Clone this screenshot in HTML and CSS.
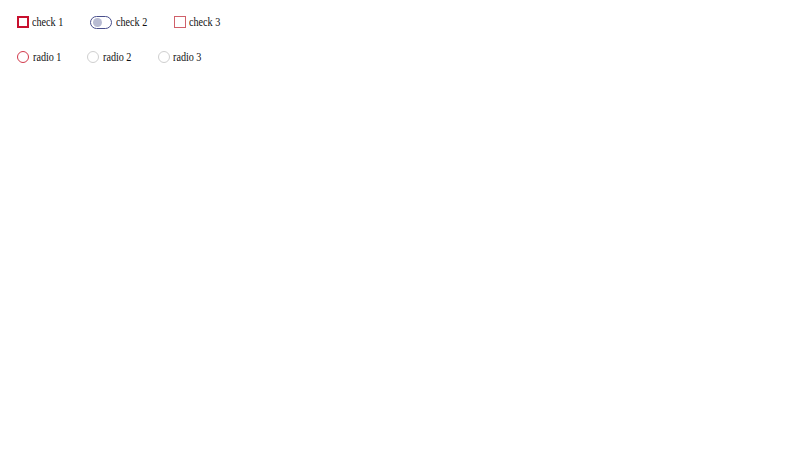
FILE: index.html
```html
<!DOCTYPE html>
<html>
<head>
<meta charset="utf-8">
<link rel="stylesheet" href="styles.css">
</head>
<body>
<div class="page">
  <div class="row">
    <label class="item"><span class="box box-strong"></span><span class="txt">check 1</span></label>
    <label class="item"><span class="toggle"><span class="knob"></span></span><span class="txt txt-wide">check 2</span></label>
    <label class="item"><span class="box box-light"></span><span class="txt">check 3</span></label>
  </div>
  <div class="row">
    <label class="item"><span class="radio radio-red"></span><span class="txt txt-wide">radio 1</span></label>
    <label class="item"><span class="radio radio-gray"></span><span class="txt txt-wide">radio 2</span></label>
    <label class="item"><span class="radio radio-gray"></span><span class="txt">radio 3</span></label>
  </div>
</div>
</body>
</html>
```
FILE: styles.css
```css
html, body { margin: 0; padding: 0; background: #fff; }
.page {
  padding: 16px 17px;
  display: flex;
  flex-direction: column;
  gap: 23px;
  font-family: "Liberation Serif", serif;
  font-size: 13px;
  color: #111;
}
.row { display: flex; align-items: center; height: 12px; }
.item { display: flex; align-items: center; gap: 3px; margin-right: 27px; }
.txt {
  display: inline-block;
  line-height: 12px;
  transform: scaleX(0.78);
  transform-origin: left center;
  margin-right: -9px;
}
.txt-wide { margin-left: 1px; }
.box { width: 12px; height: 12px; box-sizing: border-box; }
.box-strong { border: 2px solid #c8102e; }
.box-light { border: 1px solid #d0606a; }
.toggle {
  width: 22px; height: 13px; box-sizing: border-box;
  border: 1px solid #4a4f8c; border-radius: 7px;
  display: flex; align-items: center; padding-left: 2px;
}
.knob { width: 9px; height: 9px; border-radius: 50%; background: #b8bbd2; }
.radio { width: 12px; height: 12px; box-sizing: border-box; border-radius: 50%; }
.radio-red { border: 1px solid #d2394b; }
.radio-gray { border: 1px solid #cfcfcf; }
```
